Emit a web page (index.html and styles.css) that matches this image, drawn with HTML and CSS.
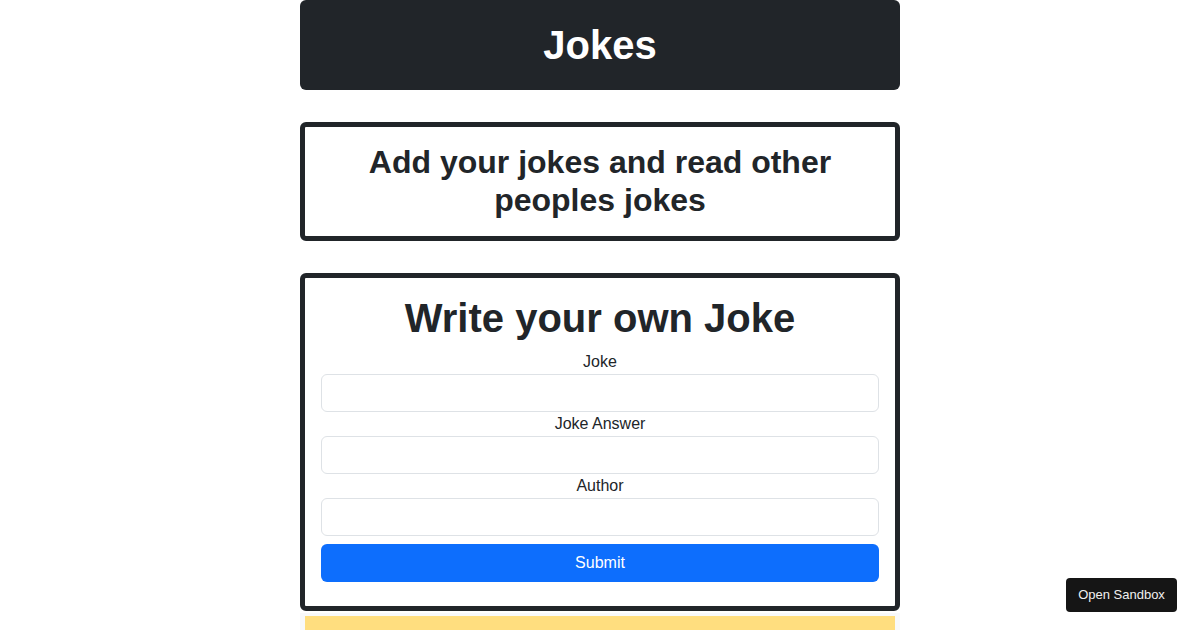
FILE: index.html
```html
<!DOCTYPE html>
<html lang="en">

<head>
    <meta charset="UTF-8">
    <meta name="viewport" content="width=device-width, initial-scale=1.0">
    <title>Jokes</title>
    <link rel="stylesheet" href="styles.css">
</head>

<body>
    <main class="container">
        <header class="topBar">
            <h1>Jokes</h1>
        </header>
        <section class="introBox">
            <h2>Add your jokes and read other peoples jokes</h2>
        </section>
        <section class="formBox">
            <h1>Write your own Joke</h1>
            <form action="">
                <label for="jokeInput">Joke</label>
                <input type="text" id="jokeInput" name="joke">
                <label for="answerInput">Joke Answer</label>
                <input type="text" id="answerInput" name="answer">
                <label for="authorInput">Author</label>
                <input type="text" id="authorInput" name="author">
                <button type="submit" class="subBtn">Submit</button>
            </form>
        </section>
        <section class="jokeList">
            <div class="jokeCard"></div>
        </section>
    </main>
    <a class="sandboxBtn" href="#">Open Sandbox</a>
</body>

</html>
```

FILE: styles.css
```css
* {
    padding: 0;
    margin: 0;
    box-sizing: border-box;
}

body {
    background-color: #fff;
    font-family: "Liberation Sans", Arial, sans-serif;
    color: #212529;
    font-size: 16px;
    line-height: 1.5;
    overflow: hidden;
}

.container {
    width: 600px;
    margin: 0 auto;
    display: flex;
    flex-direction: column;
}

.topBar {
    height: 90px;
    background-color: #212529;
    border-radius: 6px;
    display: flex;
    align-items: center;
    justify-content: center;
}

.topBar h1 {
    color: #fff;
    font-size: 40px;
    line-height: 1.2;
    font-weight: bold;
}

.introBox {
    margin-top: 32px;
    border: 5px solid #212529;
    border-radius: 6px;
    padding: 16px 20px;
    text-align: center;
}

.introBox h2 {
    font-size: 32px;
    line-height: 1.2;
    font-weight: bold;
}

.formBox {
    margin-top: 32px;
    border: 5px solid #212529;
    border-radius: 6px;
    padding: 16px 16px 24px;
    text-align: center;
}

.formBox h1 {
    font-size: 40px;
    line-height: 1.2;
    font-weight: bold;
    margin-bottom: 8px;
}

.formBox form {
    display: flex;
    flex-direction: column;
}

.formBox label {
    display: block;
    line-height: 24px;
}

.formBox input {
    height: 38px;
    border: 1px solid #dee2e6;
    border-radius: 6px;
    padding: 6px 12px;
    font: inherit;
}

.subBtn {
    margin-top: 8px;
    height: 38px;
    border: none;
    border-radius: 6px;
    background-color: #0d6efd;
    color: #fff;
    font: inherit;
    cursor: pointer;
}

.jokeList {
    margin-top: 2px;
    background-color: #f8f9fa;
    padding: 3px 5px 0;
    height: 40px;
}

.jokeCard {
    height: 100%;
    background-color: #ffde7f;
}

.sandboxBtn {
    position: fixed;
    right: 23px;
    bottom: 18px;
    width: 111px;
    height: 34px;
    display: flex;
    align-items: center;
    justify-content: center;
    background-color: #151515;
    color: #f0f0f0;
    font-size: 13px;
    border-radius: 4px;
    text-decoration: none;
}
```
